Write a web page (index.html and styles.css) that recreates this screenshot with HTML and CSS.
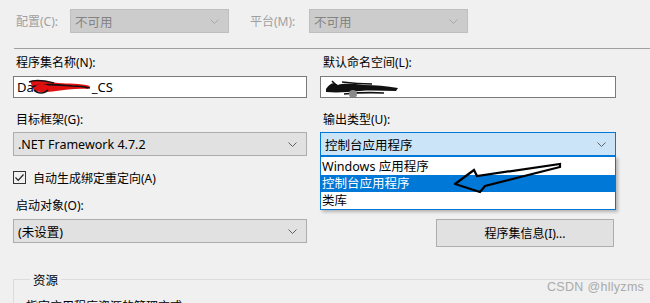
FILE: index.html
```html
<!DOCTYPE html>
<html lang="zh-CN">
<head>
    <meta charset="UTF-8">
    <title>应用程序</title>
    <link rel="stylesheet" href="styles.css">
</head>
<body>
    <div class="config-row">
        <span class="cfg-label">配置(C):</span>
        <div class="combo disabled cfg-combo">
            <span>不可用</span>
            <svg class="chevron" width="9" height="5" viewBox="0 0 9 5"><path d="M0.5 0.5 L4.5 4.5 L8.5 0.5" fill="none" stroke="#a8a8a8" stroke-width="1"/></svg>
        </div>
        <span class="cfg-label plat">平台(M):</span>
        <div class="combo disabled cfg-combo">
            <span>不可用</span>
            <svg class="chevron" width="9" height="5" viewBox="0 0 9 5"><path d="M0.5 0.5 L4.5 4.5 L8.5 0.5" fill="none" stroke="#a8a8a8" stroke-width="1"/></svg>
        </div>
    </div>

    <div class="separator"></div>

    <div class="props">
        <div class="field">
            <label>程序集名称(N):</label>
            <div class="textbox">
                <span class="tb-text">Da</span>
                <svg class="scribble-red" width="64" height="20" viewBox="0 0 64 20">
                    <path d="M2 4 C10 2 20 5 30 6 C40 7 52 6 62 9 L60 12 C48 11 38 13 28 14 C20 15 12 16 6 14 Z" fill="#e01010"/>
                    <path d="M1 5 C8 2 18 4 26 6 M4 10 C14 6 30 8 44 9 C52 9 58 10 62 11 M6 13 C10 17 16 17 20 13" fill="none" stroke="#111" stroke-width="1.6"/>
                    <ellipse cx="14" cy="10" rx="7" ry="3" fill="#e01010"/>
                </svg>
                <span class="tb-text">_CS</span>
            </div>
        </div>
        <div class="field">
            <label>默认命名空间(L):</label>
            <div class="textbox">
                <svg class="scribble-black" width="76" height="20" viewBox="0 0 76 20">
                    <path d="M2 12 C6 6 10 5 14 8 C20 6 30 7 40 8 C52 8 62 9 74 11 L72 14 C60 14 48 13 36 14 C24 15 14 16 2 15 Z" fill="#111"/>
                    <path d="M8 4 L14 10 M18 5 C26 6 34 7 48 7 M20 17 C30 16 44 15 60 16" fill="none" stroke="#111" stroke-width="1.6"/>
                    <circle cx="29" cy="17" r="4" fill="#8a8a8a"/>
                </svg>
            </div>
        </div>

        <div class="field">
            <label>目标框架(G):</label>
            <div class="combo">
                <span>.NET Framework 4.7.2</span>
                <svg class="chevron" width="9" height="5" viewBox="0 0 9 5"><path d="M0.5 0.5 L4.5 4.5 L8.5 0.5" fill="none" stroke="#606060" stroke-width="1"/></svg>
            </div>
        </div>
        <div class="field">
            <label>输出类型(U):</label>
            <div class="combo open">
                <span>控制台应用程序</span>
                <svg class="chevron" width="9" height="5" viewBox="0 0 9 5"><path d="M0.5 0.5 L4.5 4.5 L8.5 0.5" fill="none" stroke="#606060" stroke-width="1"/></svg>
                <ul class="dropdown">
                    <li>Windows 应用程序</li>
                    <li class="selected">控制台应用程序</li>
                    <li>类库</li>
                </ul>
            </div>
        </div>

        <div class="check-row">
            <span class="checkbox">
                <svg width="11" height="11" viewBox="0 0 11 11"><path d="M1.5 5.5 L4.2 8.3 L9.5 2.5" fill="none" stroke="#222" stroke-width="1.2"/></svg>
            </span>
            <span>自动生成绑定重定向(A)</span>
        </div>
        <div></div>

        <div class="field">
            <label>启动对象(O):</label>
            <div class="combo">
                <span>(未设置)</span>
                <svg class="chevron" width="9" height="5" viewBox="0 0 9 5"><path d="M0.5 0.5 L4.5 4.5 L8.5 0.5" fill="none" stroke="#606060" stroke-width="1"/></svg>
            </div>
        </div>
        <div class="field button-cell">
            <button class="btn">程序集信息(I)...</button>
        </div>
    </div>

    <fieldset class="group">
        <legend>资源</legend>
        <p>指定应用程序资源的管理方式</p>
    </fieldset>

    <div class="watermark">CSDN @hllyzms</div>

    <svg class="annotation" width="120" height="40" viewBox="0 0 120 40">
        <path d="M1 23 L20 9 L23 15 L106 3 L106 6 L31 25 L26 31 Z" fill="none" stroke="#000" stroke-width="2.2" stroke-linejoin="miter"/>
    </svg>
</body>
</html>
```

FILE: styles.css
```css
body {
    margin: 0;
    background-color: #f0f0f0;
    font-family: "Noto Sans", "Noto Sans CJK SC", sans-serif;
    font-size: 12px;
    color: #000;
    position: relative;
    height: 303px;
    overflow: hidden;
}

.config-row {
    display: flex;
    align-items: center;
    height: 24px;
    padding-top: 9px;
    padding-left: 16px;
}
.cfg-label {
    color: #a0a0a0;
    width: 54px;
}
.cfg-label.plat {
    margin-left: 21px;
    width: 59px;
}
.cfg-combo {
    width: 159px;
}

.separator {
    height: 1px;
    background: #a0a0a0;
    margin: 15px 0 6px 14px;
}

.props {
    display: grid;
    grid-template-columns: 294px 296px;
    column-gap: 13px;
    margin-left: 13px;
    align-items: start;
}
.field label {
    display: block;
    height: 16px;
    line-height: 16px;
    padding-left: 3px;
    margin-bottom: 5px;
}
.field:nth-child(3), .field:nth-child(4) {
    margin-top: 14px;
}
.field:nth-child(3) label, .field:nth-child(4) label {
    margin-bottom: 4px;
}

.textbox {
    height: 22px;
    box-sizing: border-box;
    border: 1px solid #7a7a7a;
    background: #fff;
    display: flex;
    align-items: center;
    padding-left: 3px;
}
.tb-text {
    font-size: 13px;
}
.scribble-red {
    margin-left: -6px;
}

.combo {
    position: relative;
    height: 24px;
    box-sizing: border-box;
    border: 1px solid #adadad;
    background: #e1e1e1;
    display: flex;
    align-items: center;
    padding-left: 4px;
    font-size: 12.5px;
}
.combo .chevron {
    position: absolute;
    right: 9px;
    top: 9px;
}
.combo.disabled {
    background: #cccccc;
    border-color: #bfbfbf;
    color: #838383;
}
.combo.open {
    background: #cce4f7;
    border-color: #0078d7;
}

.dropdown {
    position: absolute;
    left: -1px;
    right: -1px;
    top: 23px;
    margin: 0;
    padding: 1px 0 0 0;
    list-style: none;
    background: #fff;
    border: 1px solid #0078d7;
    box-shadow: 2px 2px 3px rgba(0, 0, 0, 0.25);
    z-index: 2;
}
.dropdown li {
    height: 17px;
    line-height: 17px;
    padding-left: 1px;
}
.dropdown li.selected {
    background: #0078d7;
    color: #fff;
}

.check-row {
    display: flex;
    align-items: center;
    margin-top: 15px;
    height: 13px;
    gap: 7px;
}
.checkbox {
    width: 13px;
    height: 13px;
    box-sizing: border-box;
    border: 1px solid #333;
    display: flex;
    align-items: center;
    justify-content: center;
}

.props .field:nth-child(7), .props .field:nth-child(8) {
    margin-top: 14px;
}
.button-cell {
    padding-top: 21px;
    display: flex;
    justify-content: flex-end;
    padding-right: 2px;
}
.btn {
    width: 178px;
    height: 28px;
    background: #e1e1e1;
    border: 1px solid #adadad;
    font-family: inherit;
    font-size: 12px;
    color: #000;
}

.group {
    margin: 23px 0 0 13px;
    padding: 0 0 0 12px;
    border: none;
    border-top: 1px solid #dcdcdc;
    border-left: 1px solid #dcdcdc;
}
.group legend {
    padding: 0 3px;
    margin-left: 4px;
    font-size: 12.5px;
}
.group p {
    margin: 8px 0 0 0;
}

.watermark {
    position: absolute;
    left: 547px;
    top: 280px;
    color: #aaaaaa;
    font-family: "Liberation Sans", sans-serif;
    font-size: 12.5px;
    letter-spacing: 0.3px;
}

.annotation {
    position: absolute;
    left: 454px;
    top: 161px;
    z-index: 3;
}
```
